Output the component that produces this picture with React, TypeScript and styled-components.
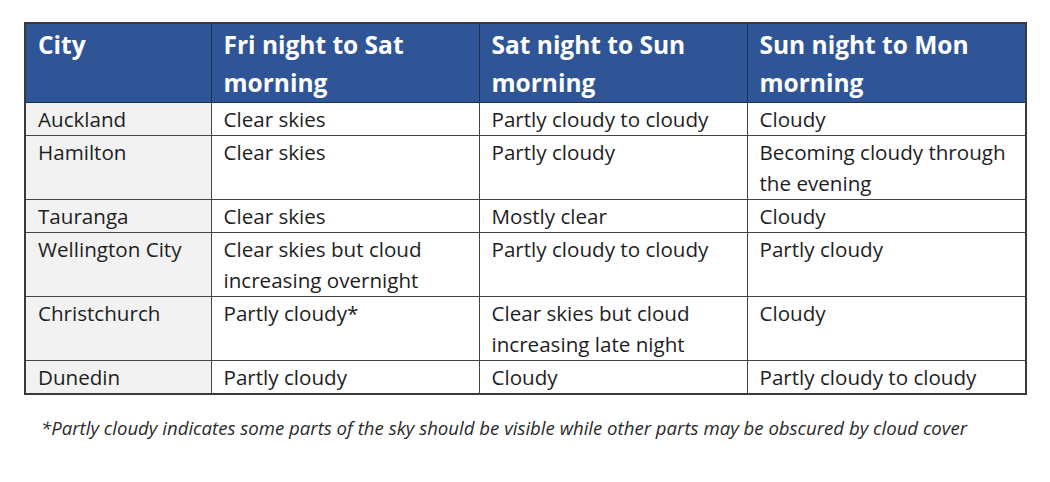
import React from "react";
import styled, { createGlobalStyle } from "styled-components";

const Global = createGlobalStyle`
  html, body { margin: 0; padding: 0; background: #ffffff; }
  body { font-family: "Open Sans", "Liberation Sans", sans-serif; }
`;

const Page = styled.div`
  width: 1050px;
  height: 482px;
  padding: 22px 0 0 24px;
  box-sizing: border-box;
  background: #fff;
`;

const Table = styled.table`
  border-collapse: collapse;
  width: 1001px;
  table-layout: fixed;
  border: 2px solid #3a3a3a;
`;

const HeadCell = styled.th<{ $w: number }>`
  width: ${(p) => p.$w}px;
  background: #2f5597;
  color: #ffffff;
  font-weight: 700;
  font-size: 24.5px;
  line-height: 38px;
  text-align: left;
  vertical-align: top;
  padding: 2px 6px 0 12px;
  height: 77px;
  box-sizing: border-box;
  border: 1.5px solid #1f2f4f;
`;

const Cell = styled.td<{ $city?: boolean }>`
  background: ${(p) => (p.$city ? "#f2f2f2" : "#ffffff")};
  color: #1e1e1e;
  font-size: 20.6px;
  line-height: 31px;
  vertical-align: top;
  padding: 1px 6px 0 12px;
  border: 1.5px solid #444;
`;

const Note = styled.p`
  margin: 20px 0 0 17px;
  font-style: italic;
  font-size: 18.6px;
  line-height: 26px;
  color: #2a2a2a;
  white-space: nowrap;
`;

const headers = [
  { t: "City", w: 186 },
  { t: "Fri night to Sat morning", w: 268 },
  { t: "Sat night to Sun morning", w: 268 },
  { t: "Sun night to Mon morning", w: 279 },
];

const rows = [
  ["Auckland", "Clear skies", "Partly cloudy to cloudy", "Cloudy"],
  ["Hamilton", "Clear skies", "Partly cloudy", "Becoming cloudy through the evening"],
  ["Tauranga", "Clear skies", "Mostly clear", "Cloudy"],
  ["Wellington City", "Clear skies but cloud increasing overnight", "Partly cloudy to cloudy", "Partly cloudy"],
  ["Christchurch", "Partly cloudy*", "Clear skies but cloud increasing late night", "Cloudy"],
  ["Dunedin", "Partly cloudy", "Cloudy", "Partly cloudy to cloudy"],
];

export default function App() {
  return (
    <>
      <Global />
      <Page>
        <Table>
          <thead>
            <tr>
              {headers.map((h) => (
                <HeadCell key={h.t} $w={h.w}>
                  {h.t}
                </HeadCell>
              ))}
            </tr>
          </thead>
          <tbody>
            {rows.map((r) => (
              <tr key={r[0]}>
                {r.map((c, i) => (
                  <Cell key={i} $city={i === 0}>
                    {c}
                  </Cell>
                ))}
              </tr>
            ))}
          </tbody>
        </Table>
        <Note>
          *Partly cloudy indicates some parts of the sky should be visible while other parts may be obscured by cloud cover
        </Note>
      </Page>
    </>
  );
}
